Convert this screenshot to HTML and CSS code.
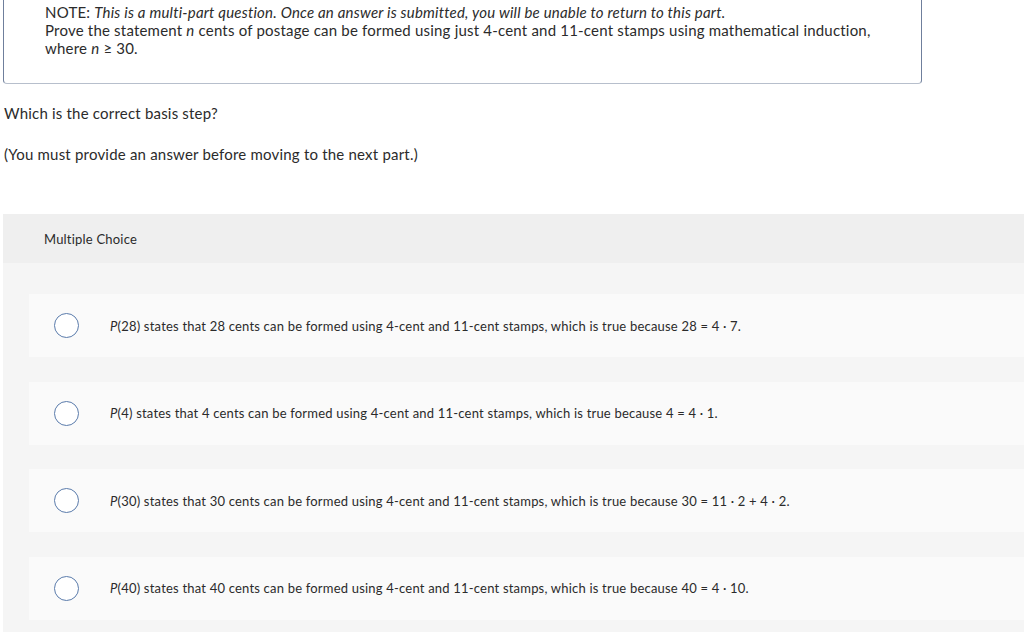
FILE: index.html
```html
<!DOCTYPE html>
<html>
<head>
<meta charset="utf-8">
<link rel="stylesheet" href="styles.css">
</head>
<body>
<div class="note-box">
  <div class="line">NOTE: <i>This is a multi-part question. Once an answer is submitted, you will be unable to return to this part.</i></div>
  <div class="line">Prove the statement <i>n</i> cents of postage can be formed using just 4-cent and 11-cent stamps using mathematical induction,</div>
  <div class="line">where <i>n</i> ≥ 30.</div>
</div>
<p class="q">Which is the correct basis step?</p>
<p class="q q2">(You must provide an answer before moving to the next part.)</p>
<div class="panel">
  <div class="panel-head">Multiple Choice</div>
  <div class="panel-body">
    <div class="opt"><span class="radio"></span><span class="txt"><i>P</i>(28) states that 28 cents can be formed using 4-cent and 11-cent stamps, which is true because 28 = 4 · 7.</span></div>
    <div class="opt"><span class="radio"></span><span class="txt"><i>P</i>(4) states that 4 cents can be formed using 4-cent and 11-cent stamps, which is true because 4 = 4 · 1.</span></div>
    <div class="opt"><span class="radio"></span><span class="txt"><i>P</i>(30) states that 30 cents can be formed using 4-cent and 11-cent stamps, which is true because 30 = 11 · 2 + 4 · 2.</span></div>
    <div class="opt"><span class="radio"></span><span class="txt"><i>P</i>(40) states that 40 cents can be formed using 4-cent and 11-cent stamps, which is true because 40 = 4 · 10.</span></div>
  </div>
</div>
</body>
</html>
```
FILE: styles.css
```css
html, body {
  margin: 0;
  padding: 0;
  background: #fff;
  overflow: hidden;
}
body {
  font-family: "Lato", "Liberation Sans", sans-serif;
  color: #2b2b2b;
  width: 1024px;
  letter-spacing: 0.2px;
}
.note-box {
  margin-left: 3px;
  width: 876px;
  padding: 3px 0 26px 41px;
  border: 1px solid #b7bfcc;
  border-top: none;
  border-left-color: #6f7f9c;
  border-right-color: #6f7f9c;
  border-radius: 0 0 4px 4px;
  font-size: 15px;
  line-height: 18px;
}
.q {
  margin: 0;
  padding-left: 4px;
  font-size: 15px;
  line-height: 18px;
  margin-top: 20px;
}
.q2 {
  margin-top: 23px;
}
.panel {
  margin-left: 3px;
  margin-top: 51px;
  width: 1060px;
  background: #f5f5f5;
}
.panel-head {
  height: 49px;
  background: #efefef;
  display: flex;
  align-items: center;
  padding-left: 41px;
  font-size: 13px;
}
.panel-body {
  padding: 31px 0 20px 26px;
  display: flex;
  flex-direction: column;
  gap: 24.67px;
}
.opt {
  height: 63px;
  background: #fafafa;
  display: flex;
  align-items: center;
  padding-left: 25px;
  font-size: 13px;
}
.radio {
  width: 23px;
  height: 23px;
  border: 1px solid #5a7bab;
  border-radius: 50%;
  background: #fff;
  flex: none;
  margin-right: 31px;
}
```
